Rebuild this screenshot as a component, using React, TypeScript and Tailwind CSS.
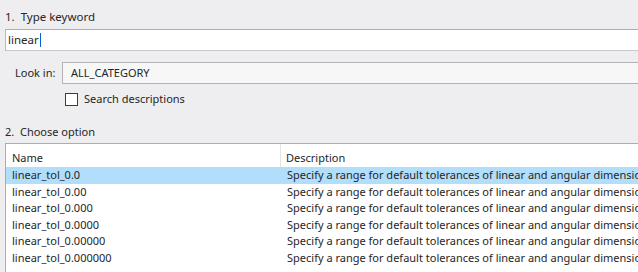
const rows = [
  "linear_tol_0.0",
  "linear_tol_0.00",
  "linear_tol_0.000",
  "linear_tol_0.0000",
  "linear_tol_0.00000",
  "linear_tol_0.000000",
];

const desc = "Specify a range for default tolerances of linear and angular dimensions";

const App = () => {
  return (
    <div
      className="w-[638px] h-[272px] overflow-hidden bg-[#eeeef0] text-[11px] text-[#262626]"
      style={{ fontFamily: '"Noto Sans", "Open Sans", sans-serif' }}
    >
      <div className="w-[700px] pl-[5px]">
        {/* 1. keyword */}
        <div className="h-[29px] pt-[8px] leading-[17px] text-[11.5px]">1.&nbsp; Type keyword</div>
        <div className="h-[22px] bg-white border border-t-[#adadb0] border-b-[#c8c8ca] border-l-[#b8b8bb] border-r-[#b8b8bb] flex items-center pl-[2px]">
          <span className="leading-[16px] text-[11.5px]">linear</span>
          <span className="w-px h-[14px] bg-[#0a5fd1] ml-[1px]" />
        </div>

        {/* look in */}
        <div className="flex items-center mt-[11px] h-[22px]">
          <span className="w-[57px] pl-[10px]">Look in:</span>
          <div className="flex-1 h-[22px] bg-[#f7f7f7] border border-[#b3b3b6] flex items-center pl-[8px]">
            ALL_CATEGORY
          </div>
        </div>
        <div className="flex items-center mt-[9px] h-[13px] pl-[60px]">
          <span className="w-[13px] h-[13px] border border-[#3c3c3c] bg-white" />
          <span className="ml-[6px]">Search descriptions</span>
        </div>

        {/* 2. choose */}
        <div className="h-[37px] pt-[17px] leading-[17px]">2.&nbsp; Choose option</div>
        <div className="bg-white border border-[#acacaf] h-[200px]">
          <div className="flex h-[23px] leading-[16px]">
            <div className="w-[275px] h-full pt-[6px] pl-[6px] border-r border-[#e3e3e3]">Name</div>
            <div className="flex-1 pt-[6px] pl-[5px]">Description</div>
          </div>
          {rows.map((name, i) => (
            <div
              key={name}
              className={`flex h-[16.6px] items-center whitespace-nowrap ${i === 0 ? "bg-[#b1defb]" : ""}`}
            >
              <div className="w-[275px] pl-[6px]">{name}</div>
              <div className="flex-1 pl-[6px]">{desc}</div>
            </div>
          ))}
        </div>
      </div>
    </div>
  );
};

export default App;
